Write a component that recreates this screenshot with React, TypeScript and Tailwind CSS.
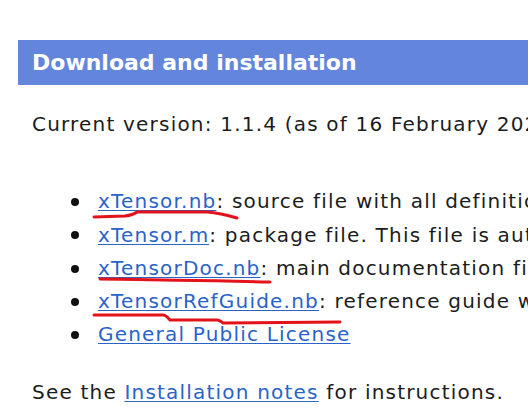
// Download and installation section with red hand-drawn annotation marks

const files = [
  { name: "xTensor.nb", text: "source file with all definitions and documentation." },
  { name: "xTensor.m", text: "package file. This file is automatically generated." },
  { name: "xTensorDoc.nb", text: "main documentation file." },
  { name: "xTensorRefGuide.nb", text: "reference guide with all symbols." },
];

function Link({ children }: { children: React.ReactNode }) {
  return <a className="text-[#2a63c9] underline underline-offset-2 decoration-1">{children}</a>;
}

function Item({ children }: { children: React.ReactNode }) {
  return (
    <li className="flex items-center">
      <span className="w-[8px] h-[8px] rounded-full bg-[#111] shrink-0 mr-[19px]" />
      <span>{children}</span>
    </li>
  );
}

export default function App() {
  return (
    <div
      className="relative w-[528px] h-[417px] overflow-hidden bg-white text-[#1c1c1c]"
      style={{ fontFamily: '"DejaVu Sans", Verdana, sans-serif' }}
    >
      <div className="ml-[18px] w-[700px] pt-[40px] text-[20px] leading-[33.3px] tracking-[1.2px] whitespace-nowrap">
        <h2 className="h-[45px] flex items-center pl-[14px] bg-[#6385db] text-white text-[22px] font-bold tracking-normal">
          Download and installation
        </h2>

        <p className="pl-[14px] mt-[23px]">Current version: 1.1.4 (as of 16 February 2021)</p>

        <ul className="pl-[53px] mt-[44px]">
          {files.map((f) => (
            <Item key={f.name}>
              <Link>{f.name}</Link>: {f.text}
            </Item>
          ))}
          <Item>
            <Link>General Public License</Link>
          </Item>
        </ul>

        <p className="pl-[14px] mt-[24px]">
          See the <Link>Installation notes</Link> for instructions.
        </p>
      </div>

      {/* red annotation strokes */}
      <svg className="absolute inset-0 pointer-events-none" width="528" height="417">
        <g fill="none" stroke="#e3131b" strokeWidth="3" strokeLinecap="round" strokeLinejoin="round">
          <path d="M94 217 L125 216 Q133 215 137 212 L207 212 Q220 213 237 218" />
          <path d="M100 279 Q180 280 270 282" />
          <path d="M94 315 L163 315 Q166 315 170 320 L217 320 Q219 320 223 323 L340 322" />
        </g>
      </svg>
    </div>
  );
}
